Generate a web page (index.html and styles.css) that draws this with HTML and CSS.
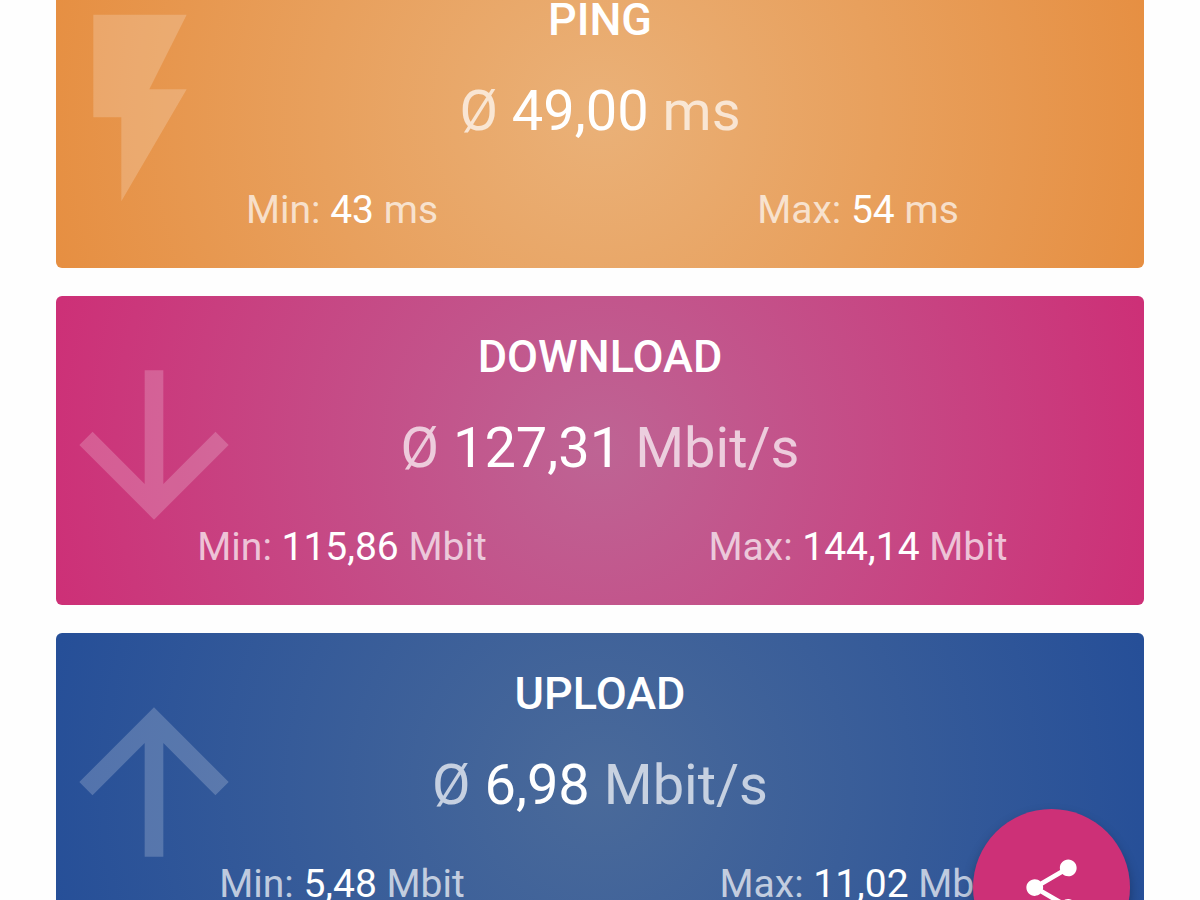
FILE: index.html
```
<!DOCTYPE html>
<html lang="de">
<head>
  <meta charset="UTF-8">
  <meta name="viewport" content="width=device-width, initial-scale=1.0">
  <title>Speedtest</title>
  <link rel="stylesheet" href="styles.css">
</head>
<body>
  <main class="results">
    <section class="card card-ping">
      <svg class="card-icon" viewBox="1.5 0 24 24" aria-hidden="true"><path d="M7 2v11h3v9l7-12h-4l4-8z"/></svg>
      <h2>PING</h2>
      <p class="average">Ø <strong>49,00</strong> ms</p>
      <div class="range">
        <p>Min: <strong>43</strong> ms</p>
        <p>Max: <strong>54</strong> ms</p>
      </div>
    </section>

    <section class="card card-download">
      <svg class="card-icon" viewBox="0 0 24 24" aria-hidden="true"><path d="M20 12l-1.41-1.41L13 16.17V4h-2v12.17l-5.58-5.59L4 12l8 8 8-8z"/></svg>
      <h2>DOWNLOAD</h2>
      <p class="average">Ø <strong>127,31</strong> Mbit/s</p>
      <div class="range">
        <p>Min: <strong>115,86</strong> Mbit</p>
        <p>Max: <strong>144,14</strong> Mbit</p>
      </div>
    </section>

    <section class="card card-upload">
      <svg class="card-icon" viewBox="0 0 24 24" aria-hidden="true"><path d="M4 12l1.41 1.41L11 7.83V20h2V7.83l5.58 5.59L20 12l-8-8-8 8z"/></svg>
      <h2>UPLOAD</h2>
      <p class="average">Ø <strong>6,98</strong> Mbit/s</p>
      <div class="range">
        <p>Min: <strong>5,48</strong> Mbit</p>
        <p>Max: <strong>11,02</strong> Mbit</p>
      </div>
    </section>
  </main>

  <button class="share-button" type="button" aria-label="Teilen">
    <svg viewBox="0 0 24 24" aria-hidden="true"><path d="M18 16.08c-.76 0-1.44.3-1.96.77L8.91 12.7c.05-.23.09-.46.09-.7s-.04-.47-.09-.7l7.05-4.11c.54.5 1.25.81 2.04.81 1.66 0 3-1.34 3-3s-1.34-3-3-3-3 1.34-3 3c0 .24.04.47.09.7L8.04 9.81C7.5 9.31 6.79 9 6 9c-1.66 0-3 1.34-3 3s1.34 3 3 3c.79 0 1.5-.31 2.04-.81l7.12 4.16c-.05.21-.08.43-.08.65 0 1.61 1.31 2.92 2.92 2.92s2.92-1.31 2.92-2.92-1.31-2.92-2.92-2.92z"/></svg>
  </button>
</body>
</html>
```

FILE: styles.css
```
body {
  font-family: Roboto, sans-serif;
  margin: 0;
  height: 100vh;
  overflow: hidden;
  background-color: #fefefe;
}

h2,
p {
  margin: 0;
}

/* list is scrolled a little, the first card is cut off at the top */
.results {
  display: flex;
  flex-direction: column;
  gap: 28px;
  margin-top: -41px;
  padding: 0 56px;
}

.card {
  position: relative;
  padding: 35px 28px;
  border-radius: 6px;
  overflow: hidden;
  text-align: center;
  color: rgba(255, 255, 255, 0.7);
}

.card-ping {
  background: radial-gradient(circle 560px at center, #eab178, #e68f42);
}

.card-download {
  background: radial-gradient(circle 560px at center, #be6494, #cd3077);
}

.card-upload {
  background: radial-gradient(circle 560px at center, #4a6a9a, #264f98);
}

.card-icon {
  position: absolute;
  top: 37px;
  left: -14px;
  width: 224px;
  height: 224px;
  fill: rgba(255, 255, 255, 0.2);
}

.card h2 {
  font-size: 45px;
  font-weight: 500;
  line-height: 52px;
  color: white;
}

.card strong {
  font-weight: 400;
  color: white;
}

.average {
  margin-top: 32px;
  font-size: 56px;
  line-height: 66px;
}

.range {
  display: grid;
  grid-template-columns: 1fr 1fr;
  margin-top: 43px;
  font-size: 39px;
  line-height: 46px;
}

.share-button {
  position: fixed;
  right: 70px;
  bottom: -66px;
  display: flex;
  align-items: center;
  justify-content: center;
  width: 157px;
  height: 157px;
  padding: 0;
  border: none;
  border-radius: 50%;
  background-color: #cd3077;
  box-shadow: 0 6px 12px rgba(0, 0, 0, 0.3);
  cursor: pointer;
}

.share-button svg {
  width: 67px;
  height: 67px;
  fill: white;
}
```
